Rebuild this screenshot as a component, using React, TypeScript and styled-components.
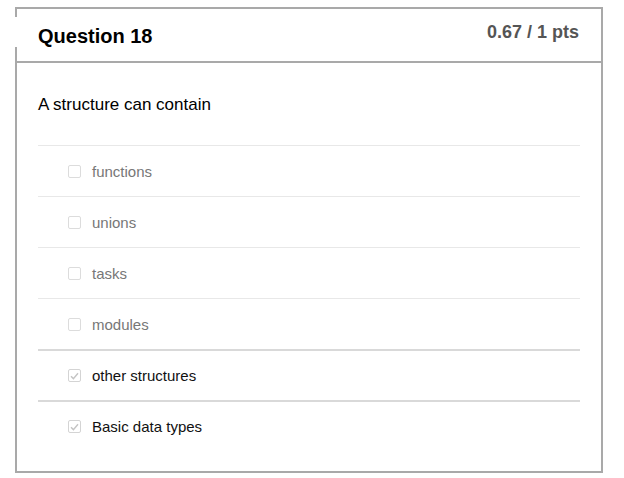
import React from 'react'
import styled, { createGlobalStyle } from 'styled-components'

const GlobalStyle = createGlobalStyle`
  *, *::before, *::after {
    box-sizing: border-box;
  }
  html, body {
    margin: 0;
    padding: 0;
    background: #fff;
    font-family: "Liberation Sans", Arial, sans-serif;
  }
`

type Answer = { text: string; checked: boolean }

const answers: Answer[] = [
  { text: 'functions', checked: false },
  { text: 'unions', checked: false },
  { text: 'tasks', checked: false },
  { text: 'modules', checked: false },
  { text: 'other structures', checked: true },
  { text: 'Basic data types', checked: true },
]

const App = () => {
  return (
    <Page>
      <GlobalStyle />
      <Card>
        <Header>
          <Title>Question 18</Title>
          <Points>0.67 / 1 pts</Points>
        </Header>
        <Body>
          <Prompt>A structure can contain</Prompt>
          <List>
            {answers.map((a) => (
              <Row key={a.text} selected={a.checked}>
                <Box checked={a.checked}>
                  {a.checked ? (
                    <svg width="9" height="8" viewBox="0 0 9 8">
                      <polyline points="1,4.2 3.4,6.6 8,1.2" fill="none" stroke="#c4c4c4" strokeWidth="1.4" />
                    </svg>
                  ) : null}
                </Box>
                <Label selected={a.checked}>{a.text}</Label>
              </Row>
            ))}
          </List>
        </Body>
      </Card>
    </Page>
  )
}

export default App

const Page = styled.div`
  padding: 7px 0 0 15px;
`
const Card = styled.div`
  width: 588px;
  height: 466px;
  border: 2px solid #a9a9a9;
  background: #fff;
`
const Header = styled.div`
  position: relative;
  height: 54px;
  display: flex;
  justify-content: space-between;
  align-items: flex-start;
  padding: 12px 22px 0 21px;
  border-bottom: 2px solid #a9a9a9;
  /* gap in the left border next to the title */
  &::before {
    content: '';
    position: absolute;
    left: -2px;
    top: 8px;
    width: 2px;
    height: 30px;
    background: #fff;
  }
`
const Title = styled.h2`
  margin: 3px 0 0;
  font-size: 20px;
  line-height: 24px;
  font-weight: bold;
  color: #000;
`
const Points = styled.div`
  font-size: 18px;
  line-height: 22px;
  font-weight: bold;
  color: #555;
`
const Body = styled.div`
  padding: 32px 21px 20px 21px;
`
const Prompt = styled.div`
  font-size: 17px;
  line-height: 20px;
  color: #000;
  margin-bottom: 30px;
`
const List = styled.div`
  display: flex;
  flex-direction: column;
`
const Row = styled.div<{ selected: boolean }>`
  height: 51px;
  display: flex;
  align-items: center;
  padding-left: 30px;
  border-top: ${(p) => (p.selected ? '2px solid #d9d9d9' : '1px solid #e8e8e8')};
`
const Box = styled.div<{ checked: boolean }>`
  width: 13px;
  height: 13px;
  border: 1px solid ${(p) => (p.checked ? '#d4d4d4' : '#dcdcdc')};
  border-radius: 2px;
  display: flex;
  align-items: center;
  justify-content: center;
  margin-right: 11px;
`
const Label = styled.span<{ selected: boolean }>`
  font-size: 15px;
  color: ${(p) => (p.selected ? '#111' : '#777')};
`
